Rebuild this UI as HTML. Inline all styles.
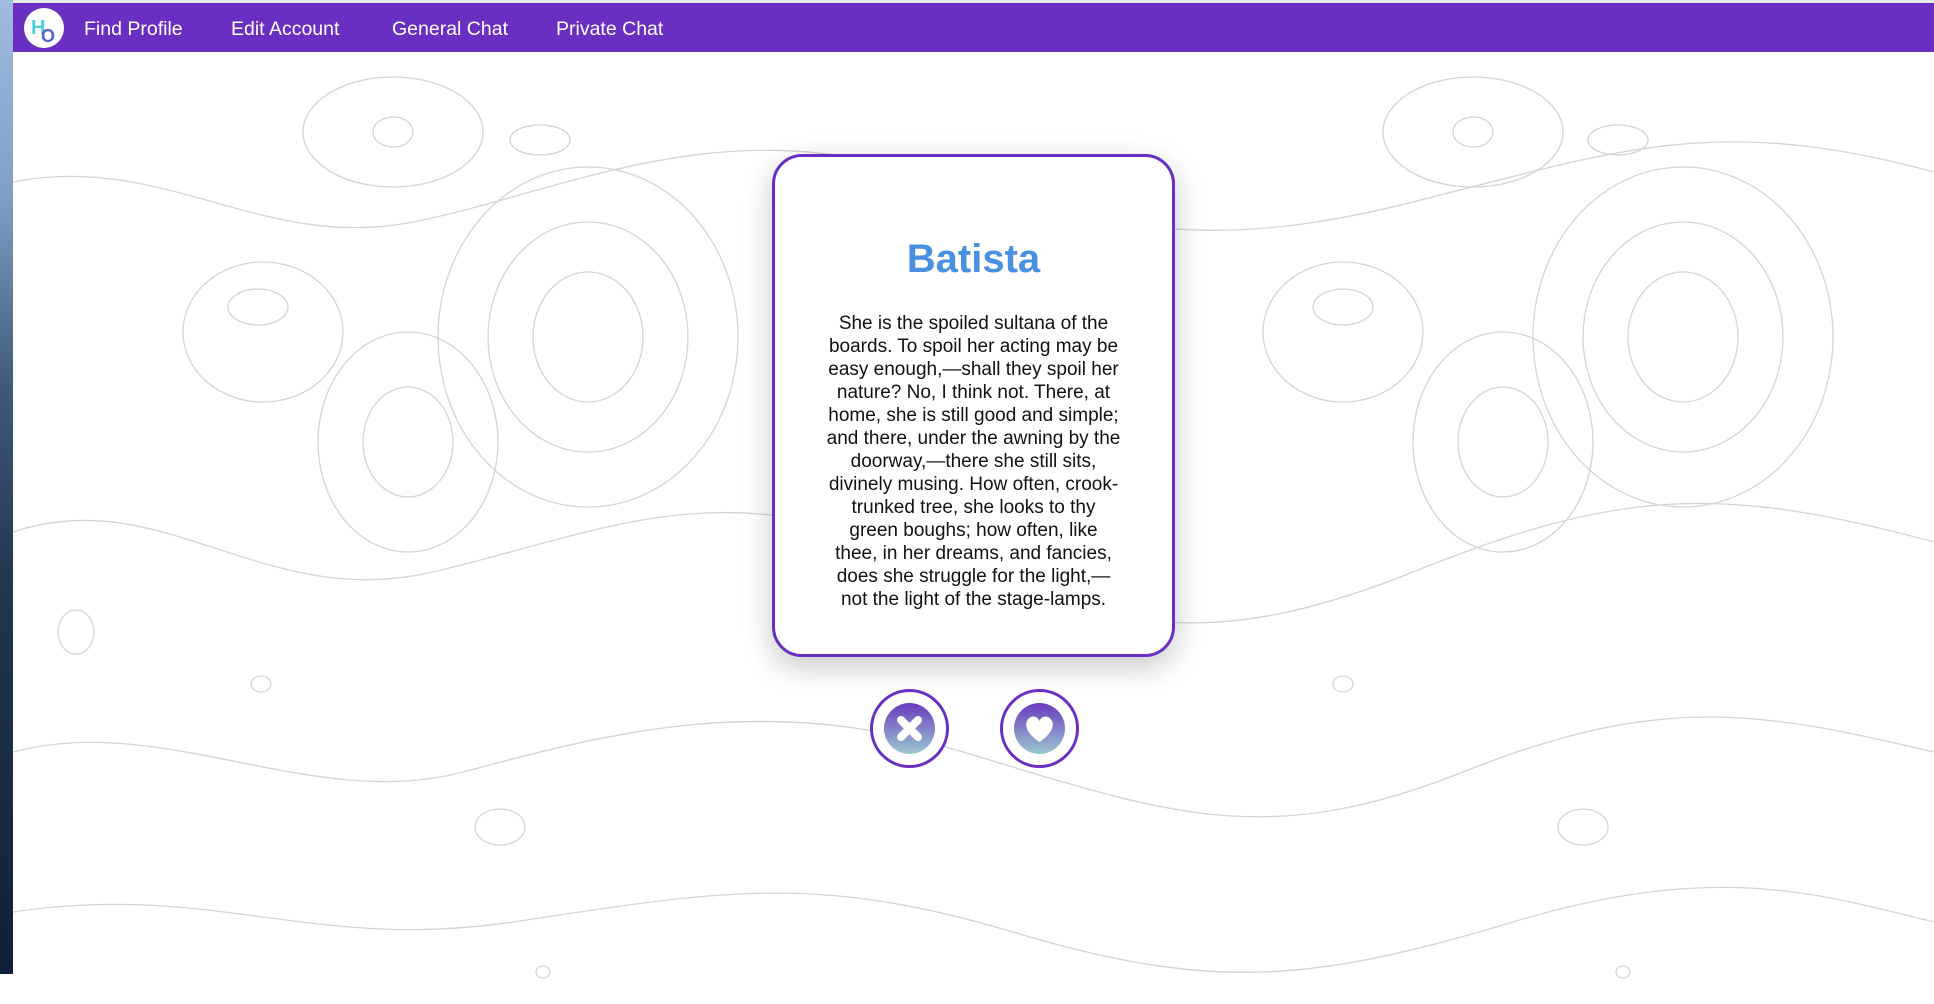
<!DOCTYPE html>
<html><head><meta charset="utf-8"><style>
html,body{margin:0;padding:0;width:1934px;height:1004px;overflow:hidden;background:#fff;font-family:"Liberation Sans",sans-serif;}
.strip{position:absolute;left:0;top:0;width:13px;height:974px;background:linear-gradient(#9fbbe0 0%,#7f9fc8 20%,#3f5a78 40%,#22364f 60%,#10203a 100%);}
.topline{position:absolute;left:13px;top:0;right:0;height:3px;background:#e8e8e8;}
nav{position:absolute;left:13px;top:3px;right:0;height:49px;background:#6a2fc2;}
.logo{position:absolute;left:11px;top:5px;width:40px;height:40px;border-radius:50%;background:#fff;}
nav a{position:absolute;top:15px;color:#fff;font-size:19.5px;text-decoration:none;}
svg.bg{position:absolute;left:13px;top:52px;}
.card{position:absolute;left:772px;top:154px;width:397px;height:497px;border:3px solid #6a2fc2;border-radius:30px;background:#fff;box-shadow:0 10px 30px rgba(0,0,0,.22);text-align:center;}
.card h1{margin:0;position:absolute;top:80px;left:0;right:0;font-size:40px;color:#4a90e2;font-weight:bold;}
.card p{position:absolute;top:155px;left:0;right:0;margin:0;font-size:19px;line-height:23px;color:#111;}
.btn{position:absolute;top:689px;width:73px;height:73px;border:3px solid #6a2fc2;border-radius:50%;background:#fff;}
.in{position:absolute;left:11px;top:11px;width:51px;height:51px;border-radius:50%;background:linear-gradient(#6a3ac0,#9bc8d0);}
</style></head><body>
<div class="strip"></div>
<div class="topline"></div>
<svg class="bg" width="1921" height="952" fill="none" stroke="#d4d4d4" stroke-width="1.3">
<ellipse cx="380" cy="80" rx="20" ry="15"/><ellipse cx="380" cy="80" rx="90" ry="55"/>
<ellipse cx="527" cy="88" rx="30" ry="15"/>
<ellipse cx="575" cy="285" rx="55" ry="65"/><ellipse cx="575" cy="285" rx="100" ry="115"/><ellipse cx="575" cy="285" rx="150" ry="170"/>
<ellipse cx="395" cy="390" rx="45" ry="55"/><ellipse cx="395" cy="390" rx="90" ry="110"/>
<ellipse cx="245" cy="255" rx="30" ry="18"/><ellipse cx="250" cy="280" rx="80" ry="70"/>
<ellipse cx="63" cy="580" rx="18" ry="22"/><ellipse cx="248" cy="632" rx="10" ry="8"/>
<ellipse cx="487" cy="775" rx="25" ry="18"/><ellipse cx="530" cy="920" rx="7" ry="6"/>
<ellipse cx="1460" cy="80" rx="20" ry="15"/><ellipse cx="1460" cy="80" rx="90" ry="55"/>
<ellipse cx="1605" cy="88" rx="30" ry="15"/>
<ellipse cx="1670" cy="285" rx="55" ry="65"/><ellipse cx="1670" cy="285" rx="100" ry="115"/><ellipse cx="1670" cy="285" rx="150" ry="170"/>
<ellipse cx="1490" cy="390" rx="45" ry="55"/><ellipse cx="1490" cy="390" rx="90" ry="110"/>
<ellipse cx="1330" cy="255" rx="30" ry="18"/><ellipse cx="1330" cy="280" rx="80" ry="70"/>
<ellipse cx="1330" cy="632" rx="10" ry="8"/><ellipse cx="1570" cy="775" rx="25" ry="18"/>
<ellipse cx="1610" cy="920" rx="7" ry="6"/>
<path d="M0 130 C150 100 250 200 400 170 S700 60 900 120 S1200 200 1400 150 S1700 60 1921 120"/>
<path d="M0 480 C150 430 250 560 420 520 S700 420 900 500 S1200 600 1400 520 S1700 430 1921 490"/>
<path d="M0 700 C150 660 300 760 450 720 S750 640 950 700 S1250 800 1450 720 S1750 660 1921 700"/>
<path d="M0 860 C200 830 300 900 500 870 S800 820 1000 880 S1300 930 1500 870 S1800 840 1921 870"/>
</svg>
<nav>
<div class="logo"><svg width="40" height="40"><text x="7" y="26" font-size="20" font-weight="bold" fill="#4fd0d8" font-family="Liberation Sans">H</text><text x="17" y="34" font-size="18" font-weight="bold" fill="#5560c8" font-family="Liberation Sans">O</text></svg></div>
<a style="left:71px">Find Profile</a>
<a style="left:218px">Edit Account</a>
<a style="left:379px">General Chat</a>
<a style="left:543px">Private Chat</a>
</nav>
<div class="card">
<h1>Batista</h1>
<p>She is the spoiled sultana of the<br>boards. To spoil her acting may be<br>easy enough,—shall they spoil her<br>nature? No, I think not. There, at<br>home, she is still good and simple;<br>and there, under the awning by the<br>doorway,—there she still sits,<br>divinely musing. How often, crook-<br>trunked tree, she looks to thy<br>green boughs; how often, like<br>thee, in her dreams, and fancies,<br>does she struggle for the light,—<br>not the light of the stage-lamps.</p>
</div>
<div class="btn" style="left:870px"><div class="in"><svg width="51" height="51"><path d="M17 17 L34 34 M34 17 L17 34" stroke="#fff" stroke-width="8" stroke-linecap="round"/></svg></div></div>
<div class="btn" style="left:1000px"><div class="in"><svg width="51" height="51"><path d="M25.5 39 C12 30 11 22 13 18 C16 12 23 12 25.5 18 C28 12 35 12 38 18 C40 22 39 30 25.5 39Z" fill="#fff"/></svg></div></div>
</body></html>
